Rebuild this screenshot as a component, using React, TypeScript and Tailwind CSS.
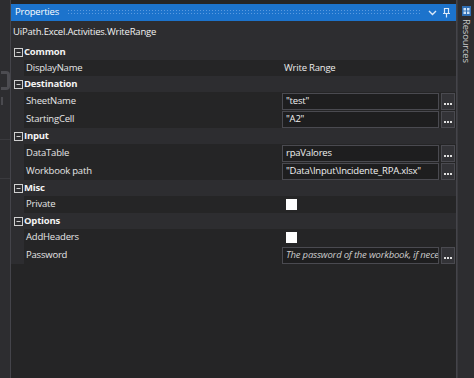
import React from 'react';

type Prop = {
  name: string;
  value?: string;
  kind: 'text' | 'box' | 'check' | 'placeholder';
};

type Category = {
  title: string;
  items: Prop[];
};

const categories: Category[] = [
  { title: 'Common', items: [{ name: 'DisplayName', value: 'Write Range', kind: 'text' }] },
  {
    title: 'Destination',
    items: [
      { name: 'SheetName', value: '"test"', kind: 'box' },
      { name: 'StartingCell', value: '"A2"', kind: 'box' },
    ],
  },
  {
    title: 'Input',
    items: [
      { name: 'DataTable', value: 'rpaValores', kind: 'box' },
      { name: 'Workbook path', value: '"Data\\Input\\Incidente_RPA.xlsx"', kind: 'box' },
    ],
  },
  { title: 'Misc', items: [{ name: 'Private', kind: 'check' }] },
  {
    title: 'Options',
    items: [
      { name: 'AddHeaders', kind: 'check' },
      { name: 'Password', value: 'The password of the workbook, if necessary', kind: 'placeholder' },
    ],
  },
];

const CollapseBox = () => (
  <svg width="9" height="9" viewBox="0 0 9 9" className="shrink-0">
    <rect x="0.5" y="0.5" width="8" height="8" fill="none" stroke="#d0d0d0" />
    <path d="M2.5 4.5h4" stroke="#d0d0d0" />
  </svg>
);

const DotsButton = () => (
  <div className="ml-[2px] flex h-[17px] w-[14px] shrink-0 items-end justify-center gap-[1px] border border-[#4a4a50] bg-[#333337] pb-[4px]">
    <div className="h-[2px] w-[2px] bg-[#e0e0e0]" />
    <div className="h-[2px] w-[2px] bg-[#e0e0e0]" />
    <div className="h-[2px] w-[2px] bg-[#e0e0e0]" />
  </div>
);

const ValueCell = ({ item }: { item: Prop }) => {
  if (item.kind === 'text') {
    return <div className="pl-[2px] text-[#ececec]">{item.value}</div>;
  }
  if (item.kind === 'check') {
    return <div className="ml-[4px] h-[11px] w-[11px] bg-white" />;
  }
  return (
    <div className="flex w-full min-w-0 items-center">
      <div className="flex h-[17px] min-w-0 flex-1 items-center overflow-hidden whitespace-nowrap border border-[#4a4a50] bg-[#1e1e1f] pl-[3px]">
        {item.kind === 'placeholder' ? (
          <span className="italic text-[#cccccc]">{item.value}</span>
        ) : (
          <span className="text-[#f0f0f0]">{item.value}</span>
        )}
      </div>
      <DotsButton />
    </div>
  );
};

export default function App() {
  return (
    <div
      className="flex h-[378px] w-[474px] overflow-hidden bg-[#2d2d30] text-[9.5px] tracking-[-0.2px]"
      style={{ fontFamily: '"Open Sans", "Noto Sans", sans-serif' }}
    >
      {/* ghosted designer behind the panel */}
      <div className="flex w-[10px] shrink-0 flex-col pt-[71px]">
        <div className="ml-[1px] h-[19px] w-[9px] rounded-r-[4px] border-[3px] border-l-0 border-[#4c4c51]" />
        <div className="ml-[1px] mt-[7px] h-[8px] w-[2px] bg-[#4a4a4f]" />
        <div className="mt-[34px] h-px w-[10px] bg-[#3a3a3e]" />
        <div className="mt-[38px] h-px w-[10px] bg-[#3a3a3e]" />
      </div>

      <div className="flex w-[447px] shrink-0 flex-col border-x border-[#44444a] bg-[#252526]">
        <div className="mt-[4px] flex h-[17px] items-center bg-[#1c73cc] pl-[4px] pr-[6px]">
          <span className="text-white">Properties</span>
          <div className="ml-[8px] mr-[6px] h-[7px] flex-1 bg-[radial-gradient(circle,#5b9be0_0.8px,transparent_1px)] bg-[length:3px_3px]" />
          <svg width="9" height="6" viewBox="0 0 9 6" className="mr-[6px]">
            <path d="M1 1l3.5 3.5L8 1" fill="none" stroke="#dbe9f8" strokeWidth="1.4" />
          </svg>
          <svg width="7" height="10" viewBox="0 0 7 10">
            <path d="M1.5 0.5h4v5h-4z M0 5.5h7 M3.5 5.5v4" fill="none" stroke="#dbe9f8" strokeWidth="1.2" />
          </svg>
        </div>

        <div className="flex h-[23px] items-center bg-[#2d2d30] pl-[2px] text-[#f2f2f2]">
          UiPath.Excel.Activities.WriteRange
        </div>

        {categories.map((cat) => (
          <div key={cat.title}>
            <div className="flex h-[16px] items-center bg-[#2d2d30]">
              <div className="flex w-[13px] shrink-0 justify-center pl-[1px]">
                <CollapseBox />
              </div>
              <span className="font-bold text-[#f4f4f4]">{cat.title}</span>
            </div>
            {cat.items.map((item) => (
              <div
                key={item.name}
                className={`flex items-center bg-[#2d2d30] ${
                  item.kind === 'box' || item.kind === 'placeholder'
                    ? 'h-[18px]'
                    : item.kind === 'check'
                    ? 'h-[17px]'
                    : 'h-[16px]'
                }`}
              >
                <div className="w-[13px] shrink-0 self-stretch" />
                <div className="flex h-full min-w-0 flex-1 items-center bg-[#252526]">
                  <div className="w-[258px] shrink-0 pl-[2px] text-[#e6e6e6]">{item.name}</div>
                  <div className="flex min-w-0 flex-1 items-center pr-[1px]">
                    <ValueCell item={item} />
                  </div>
                </div>
              </div>
            ))}
          </div>
        ))}
        <div className="flex-1 bg-[#252526]" />
      </div>

      <div className="flex flex-1 flex-col items-center border-l border-[#3a3a3e] bg-[#2d2d30] pt-[6px]">
        <svg width="9" height="10" viewBox="0 0 9 10">
          <rect x="0" y="0" width="9" height="10" fill="#2f6fb5" />
          <rect x="1.5" y="2" width="2.5" height="2.5" fill="#cfe3f7" />
          <rect x="5" y="2" width="2.5" height="2.5" fill="#cfe3f7" />
          <rect x="1.5" y="5.5" width="2.5" height="2.5" fill="#cfe3f7" />
          <rect x="5" y="5.5" width="2.5" height="2.5" fill="#cfe3f7" />
        </svg>
        <span className="mt-[3px] text-[#c8c8c8] [writing-mode:vertical-rl]">Resources</span>
      </div>
    </div>
  );
}
